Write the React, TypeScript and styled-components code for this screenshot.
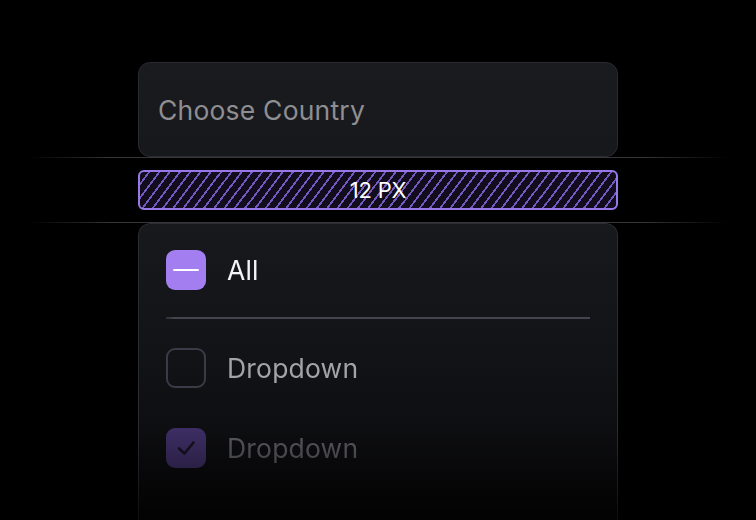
import React from 'react'
import styled, { createGlobalStyle } from 'styled-components'

const GlobalStyle = createGlobalStyle`
  html, body {
    margin: 0;
    padding: 0;
    background: #000;
  }
  body {
    font-family: Inter, "Noto Sans", "Liberation Sans", sans-serif;
    -webkit-font-smoothing: antialiased;
  }
`

const Page = styled.div`
  width: 756px;
  height: 520px;
  overflow: hidden;
  background: #000;
  display: flex;
  justify-content: center;
`

const Column = styled.div`
  width: 480px;
  padding-top: 62px;
  display: flex;
  flex-direction: column;
`

const CountryInput = styled.div`
  height: 95px;
  box-sizing: border-box;
  border: 1px solid #2a2b31;
  border-radius: 12px;
  background: linear-gradient(180deg, #1a1b1f 0%, #17181c 100%);
  display: flex;
  align-items: center;
  padding: 0 19px;
  font-size: 26.5px;
  color: #8e8e93;
  letter-spacing: 0.2px;
`

const GuideLine = styled.div`
  height: 1px;
  margin: 0 -110px;
  background: linear-gradient(
    90deg,
    rgba(58, 58, 62, 0) 0%,
    #36363b 12%,
    #36363b 88%,
    rgba(58, 58, 62, 0) 100%
  );
`

const SpacingBar = styled.div`
  margin: 12px 0;
  height: 40px;
  box-sizing: border-box;
  border: 2px solid #9877e6;
  border-radius: 6px;
  background-color: #110d1c;
  background-image: repeating-linear-gradient(
    127deg,
    #110d1c 0px,
    #110d1c 6.4px,
    #7258bf 6.4px,
    #7258bf 8.2px
  );
  display: flex;
  align-items: center;
  justify-content: center;
  color: #fff;
  font-size: 22px;
  letter-spacing: -0.2px;
`

const Panel = styled.div`
  flex: 1;
  box-sizing: border-box;
  border: 1px solid #2c2d33;
  border-bottom: none;
  border-radius: 12px 12px 0 0;
  background: linear-gradient(180deg, #18191d 0%, #121316 45%, #08080a 100%);
  padding: 26px 27px 0 27px;
  display: flex;
  flex-direction: column;
  -webkit-mask-image: linear-gradient(180deg, #000 0%, #000 70%, rgba(0, 0, 0, 0.3) 100%);
  mask-image: linear-gradient(180deg, #000 0%, #000 70%, rgba(0, 0, 0, 0.3) 100%);
`

const Row = styled.div`
  display: flex;
  align-items: center;
  gap: 21px;
  height: 40px;
  & + & {
    margin-top: 40px;
  }
`

type BoxKind = 'mixed' | 'off' | 'dim'

const Box = styled.div<{ $kind: BoxKind }>`
  width: 40px;
  height: 40px;
  box-sizing: border-box;
  border-radius: 9px;
  flex: none;
  display: flex;
  align-items: center;
  justify-content: center;
  background: ${(p) =>
    p.$kind === 'mixed' ? '#a27ef0' : p.$kind === 'dim' ? '#3c2d62' : 'transparent'};
  border: ${(p) => (p.$kind === 'off' ? '2px solid #3b3a46' : 'none')};
`

const Minus = styled.span`
  width: 26px;
  height: 2px;
  border-radius: 1px;
  background: #fff;
`

const Label = styled.span<{ $tone: 'bright' | 'mid' | 'dim' }>`
  font-size: 26.5px;
  letter-spacing: 0.2px;
  color: ${(p) => (p.$tone === 'bright' ? '#f4f4f6' : p.$tone === 'mid' ? '#a3a3a8' : '#58585d')};
`

const Divider = styled.div`
  height: 2px;
  margin: 27px 0 29px;
  background: linear-gradient(90deg, #2e2d35 0%, #46454f 2%, #46454f 100%);
`

const OptionList = styled.div`
  display: flex;
  flex-direction: column;
`

const Check = () => (
  <svg width="26" height="26" viewBox="0 0 26 26" fill="none">
    <path
      d="M6 13.5 L11.5 18.5 L20.5 7.5"
      stroke="#17111f"
      strokeWidth="2.6"
      strokeLinecap="round"
      strokeLinejoin="round"
    />
  </svg>
)

export default function App() {
  return (
    <>
      <GlobalStyle />
      <Page>
        <Column>
          <CountryInput>Choose Country</CountryInput>
          <GuideLine />
          <SpacingBar>12 PX</SpacingBar>
          <GuideLine />
          <Panel>
            <Row>
              <Box $kind="mixed">
                <Minus />
              </Box>
              <Label $tone="bright">All</Label>
            </Row>
            <Divider />
            <OptionList>
              <Row>
                <Box $kind="off" />
                <Label $tone="mid">Dropdown</Label>
              </Row>
              <Row>
                <Box $kind="dim">
                  <Check />
                </Box>
                <Label $tone="dim">Dropdown</Label>
              </Row>
            </OptionList>
          </Panel>
        </Column>
      </Page>
    </>
  )
}
